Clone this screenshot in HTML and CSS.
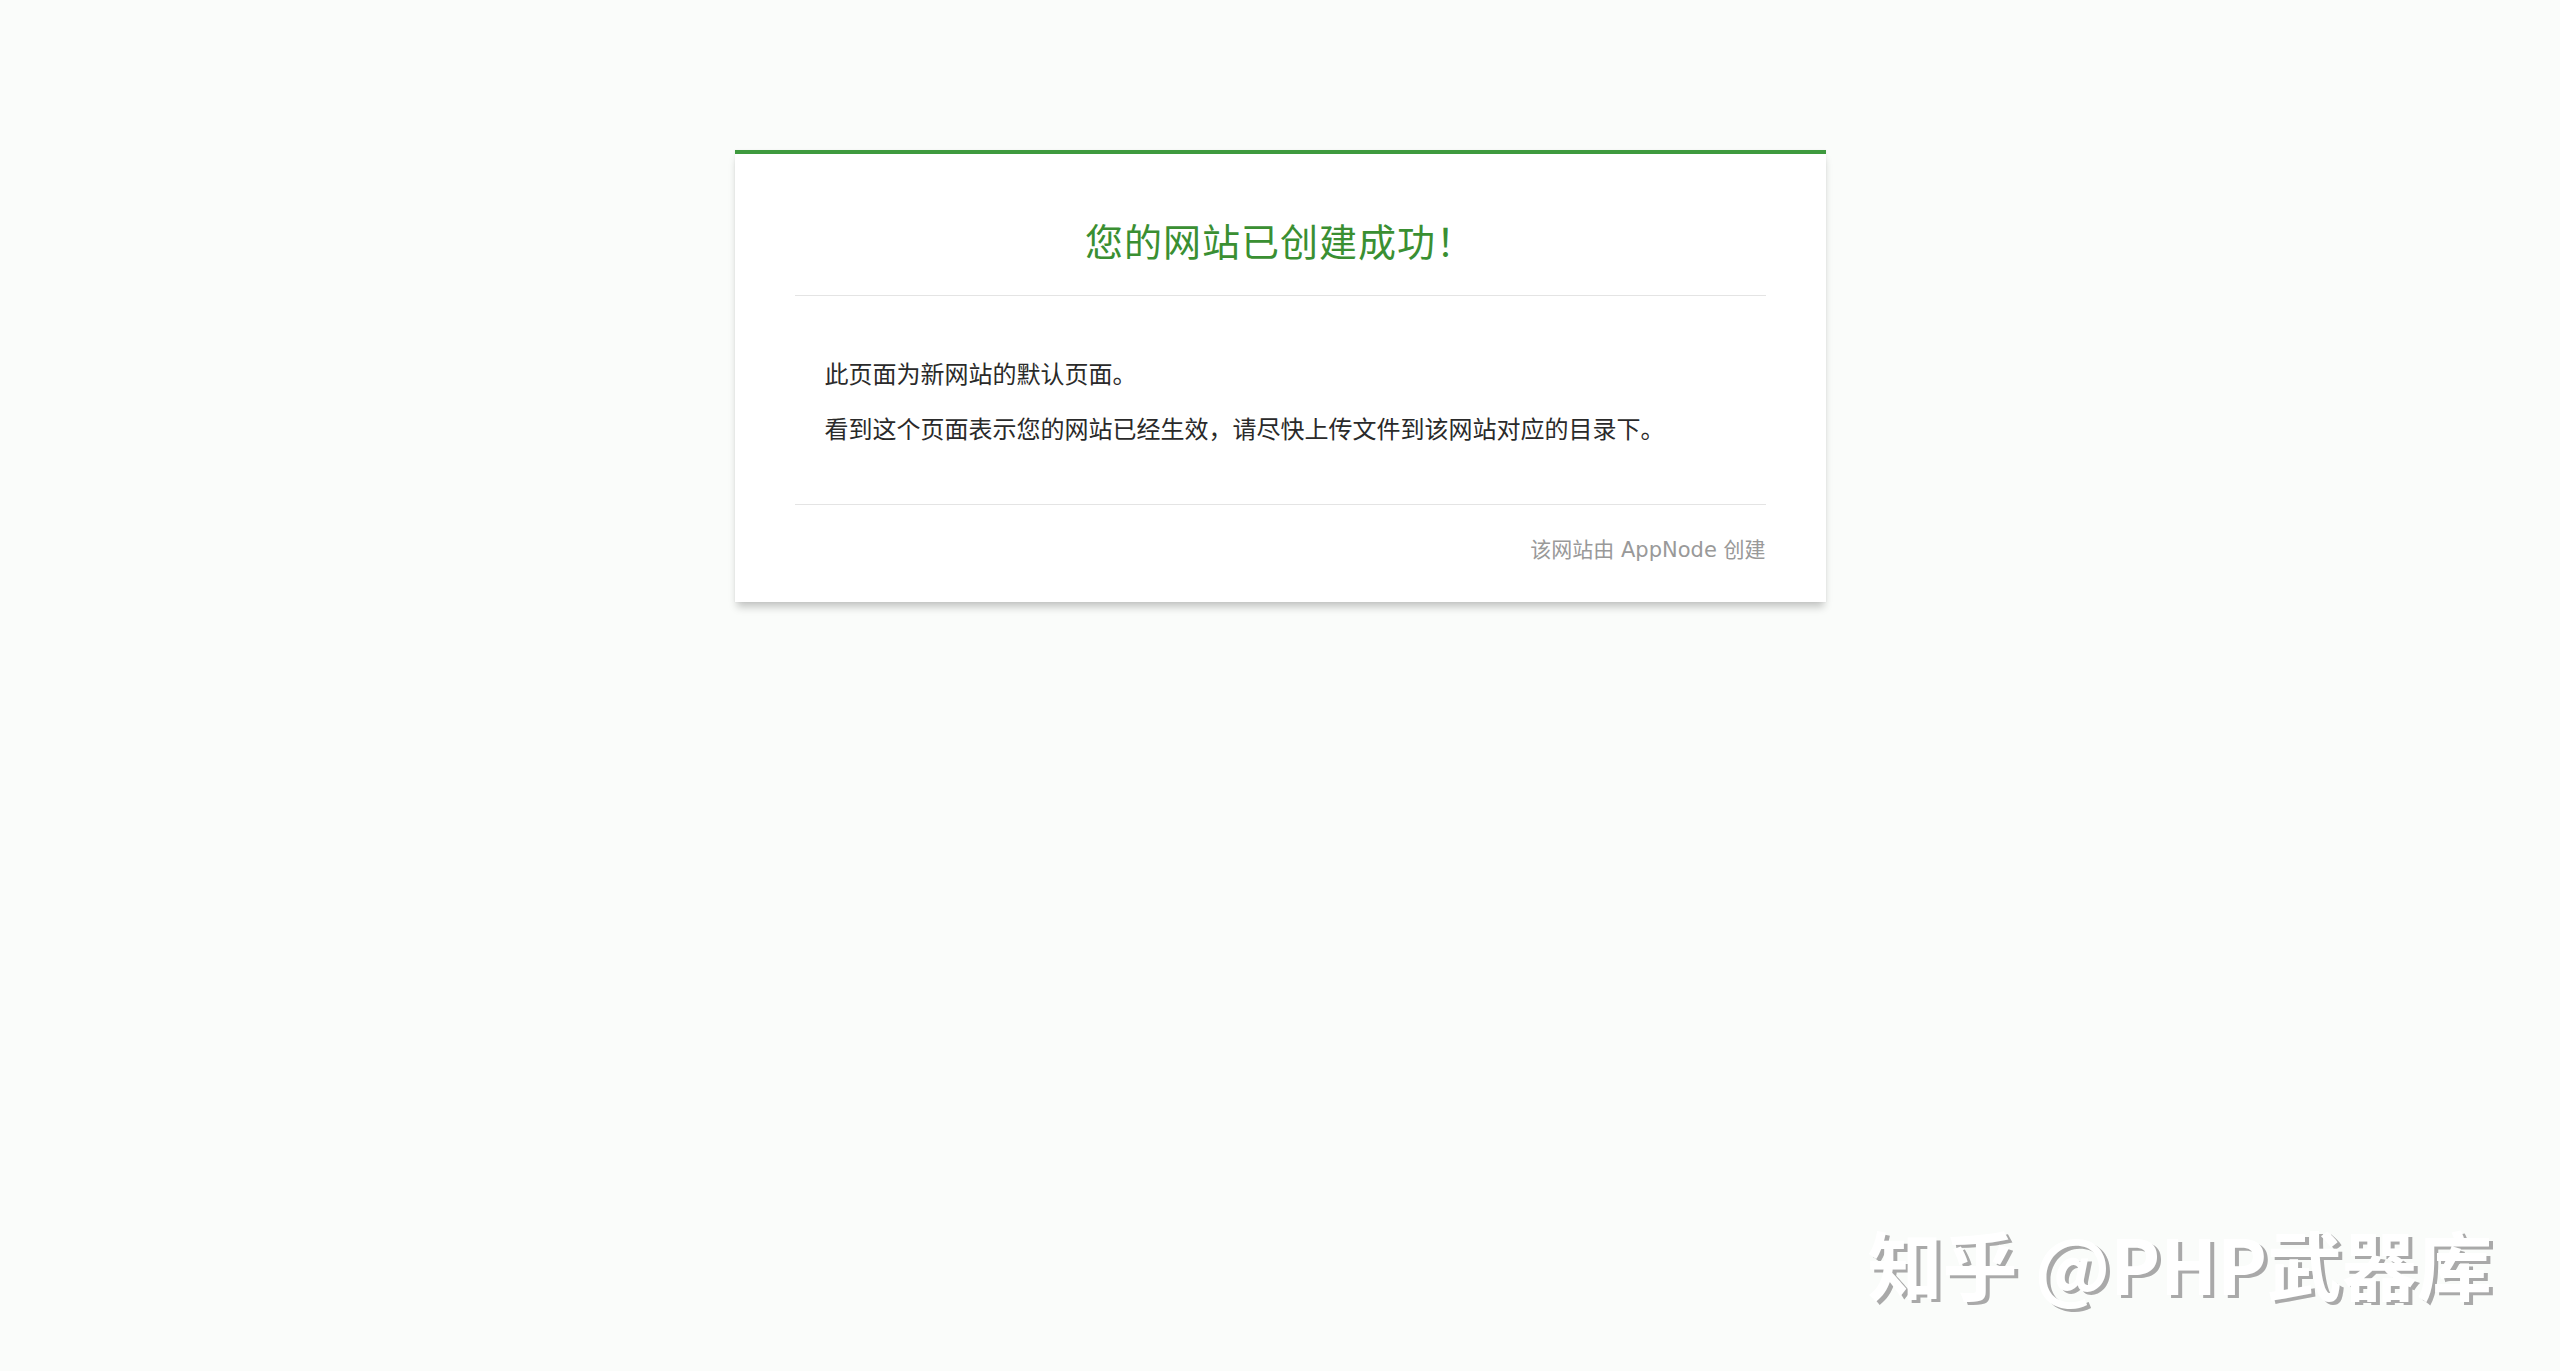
FILE: index.html
```html
<!DOCTYPE html>
<html lang="zh-CN">
<head>
<meta charset="utf-8">
<title>网站创建成功</title>
<link rel="stylesheet" href="styles.css">
</head>
<body>
<div class="card">
  <h1 class="title">您的网站已创建成功！</h1>
  <div class="content">
    <p class="line">此页面为新网站的默认页面。</p>
    <p class="line">看到这个页面表示您的网站已经生效，请尽快上传文件到该网站对应的目录下。</p>
  </div>
  <div class="footer">该网站由 AppNode 创建</div>
</div>
<div class="watermark">知乎 @PHP武器库</div>
</body>
</html>
```
FILE: styles.css
```css
html, body {
  margin: 0;
  padding: 0;
  background: #fafcfa;
  font-family: "DejaVu Sans", "Noto Sans CJK SC", sans-serif;
}
body {
  min-height: 1371px;
  position: relative;
  overflow: hidden;
}
.card {
  box-sizing: border-box;
  width: 1091px;
  margin: 150px auto 0;
  background: #fff;
  border-top: 4px solid #3e9a3e;
  padding: 0 60px;
  box-shadow: 0 7px 8px -2px rgba(0, 0, 0, 0.22), 0 0 2px rgba(0, 0, 0, 0.06);
}
.title {
  margin: 0;
  padding: 59px 0 28px;
  font-size: 38px;
  line-height: 54px;
  font-weight: normal;
  letter-spacing: 1px;
  color: #3a8f32;
  text-align: center;
  border-bottom: 1px solid #e4e4e4;
  font-family: "Noto Sans CJK SC", sans-serif;
}
.content {
  padding: 61px 30px 56px;
  border-bottom: 1px solid #e4e4e4;
}
.line {
  margin: 0;
  font-size: 24px;
  line-height: 36px;
  color: #2a2a2a;
}
.line + .line {
  margin-top: 19px;
}
.footer {
  padding: 30px 0 37px;
  font-size: 21px;
  line-height: 30px;
  color: #999;
  text-align: right;
}
.watermark {
  position: absolute;
  right: 68px;
  top: 1213px;
  font-family: "Noto Sans CJK SC", sans-serif;
  font-size: 75px;
  line-height: 100px;
  font-weight: 700;
  color: #fff;
  text-shadow: 4px 3px 0 #a9a9a9;
  white-space: nowrap;
}
```
